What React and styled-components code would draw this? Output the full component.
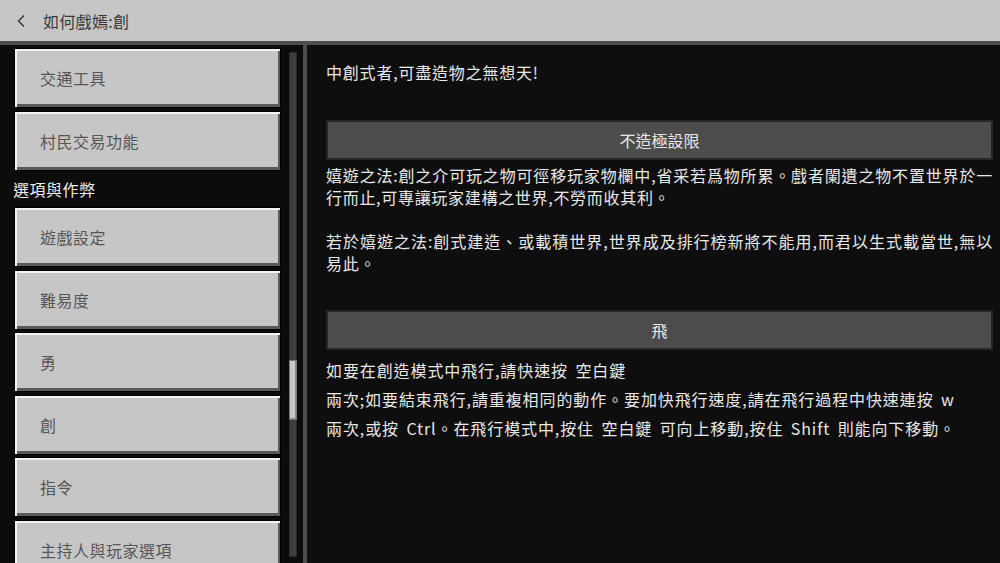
import styled, { createGlobalStyle } from 'styled-components';

const GlobalStyle = createGlobalStyle`
  html, body {
    margin: 0;
    padding: 0;
    background: #0e0e0e;
    font-family: "Noto Sans CJK TC", "Noto Sans", sans-serif;
  }
  * {
    box-sizing: border-box;
  }
`;

const Screen = styled.div`
  width: 1000px;
  height: 563px;
  display: flex;
  flex-direction: column;
  overflow: hidden;
`;

const Header = styled.header`
  height: 45px;
  flex-shrink: 0;
  background: #c6c6c6;
  border-bottom: 4px solid #4e4e4e;
  display: flex;
  align-items: center;
  padding-left: 14px;
  gap: 13px;
  color: #3a3a3a;
  font-size: 16px;
`;

const BackIcon = styled.svg`
  width: 16px;
  height: 16px;
  display: block;
`;

const Title = styled.span`
  line-height: 1;
  letter-spacing: 0.3px;
`;

const Main = styled.div`
  flex: 1;
  display: flex;
  min-height: 0;
`;

const Sidebar = styled.aside`
  width: 303px;
  flex-shrink: 0;
  display: flex;
  padding-left: 14px;
  gap: 8px;
  background: #0c0c0c;
`;

const List = styled.div`
  width: 267px;
  padding-top: 3px;
  display: flex;
  flex-direction: column;
  gap: 2.5px;
  overflow: hidden;
`;

const MenuButton = styled.div`
  height: 60px;
  flex-shrink: 0;
  display: flex;
  align-items: center;
  padding-left: 25px;
  background: #c6c6c6;
  border: 1px solid #000;
  box-shadow: inset 2px 2px 0 #f2f2f2, inset -2px -3px 0 #5a5a5a;
  color: #565656;
  font-size: 16px;
  letter-spacing: 0.5px;
`;

const SectionLabel = styled.div`
  height: 31.5px;
  flex-shrink: 0;
  display: flex;
  align-items: center;
  margin-left: -1px;
  color: #ececec;
  font-size: 16px;
  letter-spacing: 0.5px;
`;

const ScrollTrack = styled.div`
  width: 8px;
  margin-top: 7px;
  height: 505px;
  background: #3e3e3e;
  border: 1px solid #2a2a2a;
`;

const ScrollThumb = styled.div`
  width: 8px;
  height: 60px;
  margin: 307px 0 0 -1px;
  background: #c8c8c8;
  border: 1px solid #7a7a7a;
  box-shadow: inset -1px -1px 0 #8c8c8c;
`;

const Divider = styled.div`
  width: 4px;
  flex-shrink: 0;
  background: #4d4d4d;
`;

const Content = styled.section`
  flex: 1;
  padding: 16px 7px 0 19px;
  background: #0e0e0e;
  color: #e8e8e8;
  font-size: 16px;
  overflow: hidden;
`;

const Lead = styled.p`
  margin: 0;
  line-height: 22px;
  letter-spacing: 0.8px;
`;

const SectionBar = styled.div`
  height: 40px;
  margin: ${(p) => p.$top}px 0 ${(p) => p.$after}px 0;
  display: flex;
  align-items: center;
  justify-content: center;
  background: #4c4c4c;
  border: 2px solid #262626;
  color: #e8e8e8;
  font-size: 16px;
`;

const Para = styled.p`
  margin: 0 0 ${(p) => p.$after || 0}px 0;
  line-height: 22px;
  text-align: justify;
  letter-spacing: 0.7px;
`;

const Line = styled.div`
  line-height: 29px;
  white-space: nowrap;
  letter-spacing: 0.9px;
  word-spacing: 3px;
`;

const menuTop = ['交通工具', '村民交易功能'];
const menuBottom = ['遊戲設定', '難易度', '勇', '創', '指令', '主持人與玩家選項'];

export default function App() {
  return (
    <Screen>
      <GlobalStyle />
      <Header>
        <BackIcon viewBox="0 0 16 16" fill="none">
          <path d="M10 2.5 L4.5 8 L10 13.5" stroke="#333" strokeWidth="1.4" />
        </BackIcon>
        <Title>如何戲嫣:創</Title>
      </Header>
      <Main>
        <Sidebar>
          <List>
            {menuTop.map((m) => (
              <MenuButton key={m}>{m}</MenuButton>
            ))}
            <SectionLabel>選項與作弊</SectionLabel>
            {menuBottom.map((m) => (
              <MenuButton key={m}>{m}</MenuButton>
            ))}
          </List>
          <ScrollTrack>
            <ScrollThumb />
          </ScrollTrack>
        </Sidebar>
        <Divider />
        <Content>
          <Lead>中創式者,可盡造物之無想天!</Lead>
          <SectionBar $top={37} $after={4}>不造極設限</SectionBar>
          <Para $after={22}>
            嬉遊之法:創之介可玩之物可徑移玩家物欄中,省采若爲物所累。戲者闌遺之物不置世界於一行而止,可專讓玩家建構之世界,不勞而收其利。
          </Para>
          <Para>
            若於嬉遊之法:創式建造、或載積世界,世界成及排行榜新將不能用,而君以生式載當世,無以易此。
          </Para>
          <SectionBar $top={36} $after={6}>飛</SectionBar>
          <Line>如要在創造模式中飛行,請快速按 空白鍵</Line>
          <Line>兩次;如要結束飛行,請重複相同的動作。要加快飛行速度,請在飛行過程中快速連按 w</Line>
          <Line>兩次,或按 Ctrl。在飛行模式中,按住 空白鍵 可向上移動,按住 Shift 則能向下移動。</Line>
        </Content>
      </Main>
    </Screen>
  );
}
